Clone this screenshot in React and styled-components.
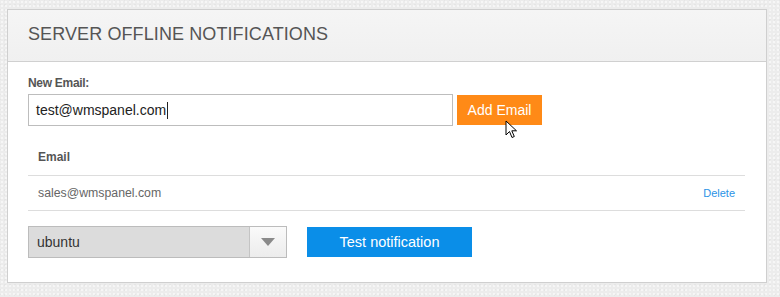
import React, { useState } from "react";
import styled, { createGlobalStyle } from "styled-components";

const GlobalStyle = createGlobalStyle`
  body {
    margin: 0;
    background: #ebebeb;
    font-family: "Liberation Sans", Arial, sans-serif;
  }
`;

const Page = styled.div`
  width: 780px;
  height: 297px;
  padding: 9px 13px 0 7px;
  box-sizing: border-box;
  background-color: #ececec;
  background-image: radial-gradient(rgba(255, 255, 255, 0.5) 1px, transparent 1px),
    radial-gradient(rgba(0, 0, 0, 0.03) 1px, transparent 1px);
  background-size: 4px 4px, 5px 5px;
  background-position: 0 0, 2px 2px;
`;

const Panel = styled.div`
  width: 760px;
  height: 274px;
  box-sizing: border-box;
  border: 1px solid #cfcfcf;
  background: #fff;
`;

const Header = styled.div`
  height: 52px;
  box-sizing: border-box;
  border-bottom: 1px solid #d0d0d0;
  background: linear-gradient(#f5f5f5, #f0f0f0);
  padding: 14px 0 0 20px;
  font-size: 18px;
  color: #555;
  letter-spacing: 0.1px;
`;

const Body = styled.div`
  padding: 14px 20px 0 20px;
`;

const Label = styled.div`
  font-size: 12px;
  font-weight: bold;
  color: #555;
  margin-bottom: 4px;
  letter-spacing: -0.3px;
`;

const Row = styled.div`
  display: flex;
  align-items: center;
  gap: ${(p) => p.gap || 4}px;
`;

const Input = styled.div`
  width: 425px;
  height: 32px;
  box-sizing: border-box;
  border: 1px solid #bdbdbd;
  padding: 0 0 0 7px;
  display: flex;
  align-items: center;
  font-size: 14px;
  color: #222;
`;

const Caret = styled.span`
  display: inline-block;
  width: 1px;
  height: 17px;
  background: #222;
  margin-left: 1px;
`;

const Button = styled.button`
  height: ${(p) => p.h || 30}px;
  width: ${(p) => p.w}px;
  border: 0;
  padding: 0;
  background: ${(p) => p.bg};
  color: #fff;
  font-family: "Liberation Sans", Arial, sans-serif;
  font-size: ${(p) => p.fs || 14}px;
  position: relative;
`;

const Cursor = styled.svg`
  position: absolute;
  left: 48px;
  top: 25px;
`;

const Table = styled.div`
  width: 717px;
  margin-top: 14px;
`;

const HeadCell = styled.div`
  height: 36px;
  box-sizing: border-box;
  padding: 10px 0 0 10px;
  font-size: 12px;
  font-weight: bold;
  color: #555;
  border-bottom: 1px solid #ddd;
`;

const DataRow = styled.div`
  height: 35px;
  box-sizing: border-box;
  border-bottom: 1px solid #ddd;
  display: flex;
  align-items: center;
  justify-content: space-between;
  padding: 0 10px;
  font-size: 12.3px;
  color: #666;
`;

const DeleteLink = styled.a`
  color: #2a93e6;
  font-size: 11px;
  cursor: pointer;
`;

const Select = styled.div`
  width: 259px;
  height: 32px;
  box-sizing: border-box;
  border: 1px solid #bcbcbc;
  background: #dcdcdc;
  display: flex;
`;

const SelectText = styled.div`
  flex: 1;
  display: flex;
  align-items: center;
  padding-left: 8px;
  font-size: 14px;
  color: #333;
`;

const SelectArrow = styled.div`
  width: 36px;
  border-left: 1px solid #c4c4c4;
  background: linear-gradient(#fafafa, #ececec);
  display: flex;
  align-items: center;
  justify-content: center;
`;

const Triangle = styled.div`
  width: 0;
  height: 0;
  border-left: 7px solid transparent;
  border-right: 7px solid transparent;
  border-top: 8px solid #8a8a8a;
`;

const Bottom = styled.div`
  margin-top: 15px;
`;

export default function App() {
  const [emails] = useState(["sales@wmspanel.com"]);
  return (
    <>
      <GlobalStyle />
      <Page>
        <Panel>
          <Header>SERVER OFFLINE NOTIFICATIONS</Header>
          <Body>
            <Label>New Email:</Label>
            <Row gap={4}>
              <Input>
                test@wmspanel.com
                <Caret />
              </Input>
              <Button w={85} bg="#ff8a17">
                Add Email
                <Cursor width="13" height="20" viewBox="0 0 13 20">
                  <path
                    d="M1 1 L1 15 L4.5 11.5 L7 17.5 L9.3 16.5 L6.8 10.8 L11.5 10.8 Z"
                    fill="#fff"
                    stroke="#000"
                    strokeWidth="1"
                    strokeLinejoin="round"
                  />
                </Cursor>
              </Button>
            </Row>
            <Table>
              <HeadCell>Email</HeadCell>
              {emails.map((e) => (
                <DataRow key={e}>
                  <span>{e}</span>
                  <DeleteLink>Delete</DeleteLink>
                </DataRow>
              ))}
            </Table>
            <Bottom>
              <Row gap={20}>
                <Select>
                  <SelectText>ubuntu</SelectText>
                  <SelectArrow>
                    <Triangle />
                  </SelectArrow>
                </Select>
                <Button w={165} bg="#0a8ee8" fs={14.5}>
                  Test notification
                </Button>
              </Row>
            </Bottom>
          </Body>
        </Panel>
      </Page>
    </>
  );
}
